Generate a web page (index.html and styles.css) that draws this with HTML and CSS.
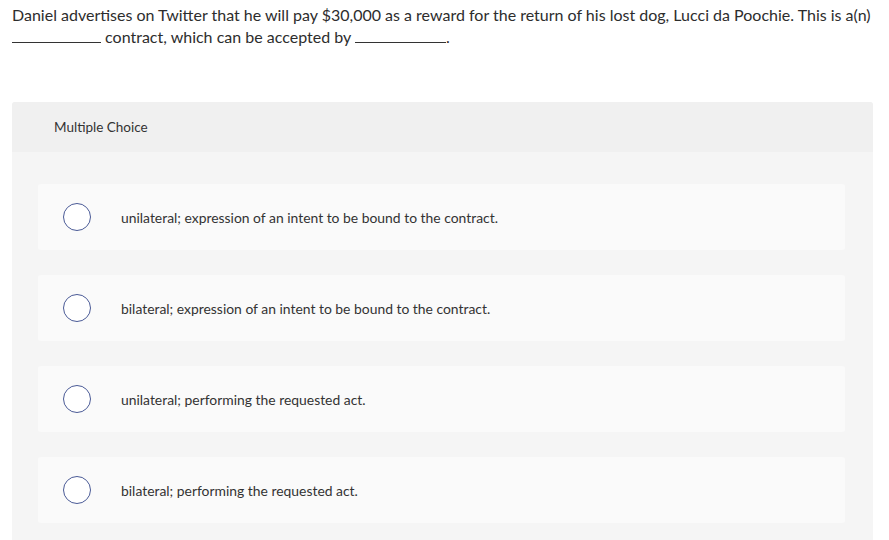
FILE: index.html
```html
<!DOCTYPE html>
<html>
<head>
<meta charset="utf-8">
<link rel="stylesheet" href="styles.css">
</head>
<body>
<div class="page">
  <p class="question">Daniel advertises on Twitter that he will pay $30,000 as a reward for the return of his lost dog, Lucci da Poochie. This is a(n) <span class="blank"></span> contract, which can be accepted by <span class="blank"></span>.</p>
  <section class="panel">
    <div class="panel-head">Multiple Choice</div>
    <div class="panel-body">
      <div class="option"><span class="radio"></span><span class="label">unilateral; expression of an intent to be bound to the contract.</span></div>
      <div class="option"><span class="radio"></span><span class="label">bilateral; expression of an intent to be bound to the contract.</span></div>
      <div class="option"><span class="radio"></span><span class="label">unilateral; performing the requested act.</span></div>
      <div class="option"><span class="radio"></span><span class="label">bilateral; performing the requested act.</span></div>
    </div>
  </section>
</div>
</body>
</html>
```
FILE: styles.css
```css
html, body { margin: 0; padding: 0; background: #fff; }
body { font-family: Lato, "Open Sans", sans-serif; color: #333; }
.page { padding: 4px 16px 0 12px; }
.question {
  margin: 0;
  font-size: 16px;
  line-height: 22px;
  color: #2d2d2d;
}
.blank {
  display: inline-block;
  width: 89px;
  border-bottom: 1px solid #333;
  vertical-align: baseline;
}
.blank + .blank, .question .blank:last-child { width: 91px; }
.panel { margin-top: 54px; background: #f5f5f5; border-radius: 3px 3px 0 0; }
.panel-head {
  background: #f0f0f0;
  height: 50px;
  display: flex;
  align-items: center;
  padding-left: 42px;
  font-size: 13.5px;
  color: #333;
  border-radius: 3px 3px 0 0;
}
.panel-body {
  padding: 32px 28px 40px 26px;
  display: flex;
  flex-direction: column;
  gap: 25px;
}
.option {
  background: #fafafa;
  border-radius: 3px;
  height: 66px;
  display: flex;
  align-items: center;
  padding-left: 25px;
}
.radio {
  width: 26px;
  height: 26px;
  border: 1.5px solid #4a5a96;
  border-radius: 50%;
  background: #fff;
  flex: none;
}
.label {
  margin-left: 30px;
  font-size: 13.9px;
  color: #333;
}
```
